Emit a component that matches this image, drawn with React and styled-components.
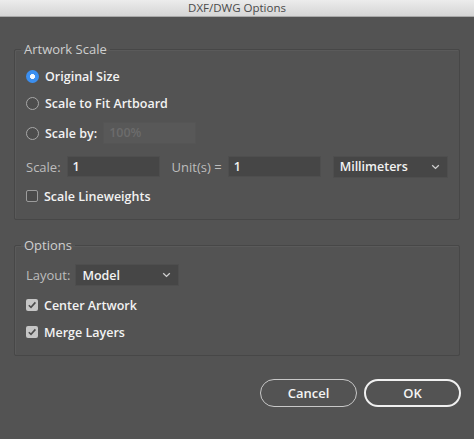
import React from "react";
import styled, { createGlobalStyle } from "styled-components";

const Global = createGlobalStyle`
  html, body {
    margin: 0;
    padding: 0;
    background: #535353;
  }
  * {
    box-sizing: border-box;
  }
`;

function Chevron() {
  return (
    <svg width="9" height="6" viewBox="0 0 9 6">
      <path d="M1.2 1.2 L4.5 4.4 L7.8 1.2" fill="none" stroke="#d0d0d0" strokeWidth="1.3" />
    </svg>
  );
}

function Radio({ checked, label }) {
  return (
    <Option>
      <RadioDot checked={checked} />
      <OptionText>{label}</OptionText>
    </Option>
  );
}

function Check({ checked, label }) {
  return (
    <Option>
      <Box checked={checked}>
        {checked && (
          <svg width="10" height="10" viewBox="0 0 10 10">
            <path d="M1.8 5.2 L4 7.4 L8.4 2.4" fill="none" stroke="#4c4c4c" strokeWidth="1.6" />
          </svg>
        )}
      </Box>
      <OptionText>{label}</OptionText>
    </Option>
  );
}

function App() {
  return (
    <Window>
      <Global />
      <TitleBar>DXF/DWG Options</TitleBar>
      <Body>
        <Group>
          <Legend>Artwork Scale</Legend>
          <Row h={20} top={9}>
            <Radio checked label="Original Size" />
          </Row>
          <Row h={20} top={7}>
            <Radio label="Scale to Fit Artboard" />
          </Row>
          <Row h={22} top={9}>
            <Radio label="Scale by:" />
            <DisabledField>100%</DisabledField>
          </Row>
          <Row h={21} top={12} gap={6}>
            <FieldLabel>Scale:</FieldLabel>
            <Field w={93}>1</Field>
            <FieldLabel style={{ marginLeft: 6 }}>Unit(s) =</FieldLabel>
            <Field w={93}>1</Field>
            <Select w={115} style={{ marginLeft: 6 }}>
              Millimeters
              <Chevron />
            </Select>
          </Row>
          <Row h={20} top={9}>
            <Check label="Scale Lineweights" />
          </Row>
        </Group>

        <Group spaced>
          <Legend>Options</Legend>
          <Row h={22} top={11} gap={5}>
            <FieldLabel>Layout:</FieldLabel>
            <Select w={104}>
              Model
              <Chevron />
            </Select>
          </Row>
          <Row h={20} top={9}>
            <Check checked label="Center Artwork" />
          </Row>
          <Row h={20} top={7}>
            <Check checked label="Merge Layers" />
          </Row>
        </Group>

        <Buttons>
          <Button>Cancel</Button>
          <Button primary>OK</Button>
        </Buttons>
      </Body>
    </Window>
  );
}

const Window = styled.div`
  width: 474px;
  height: 439px;
  background: #535353;
  font-family: "Open Sans", "Liberation Sans", sans-serif;
  overflow: hidden;
  display: flex;
  flex-direction: column;
`;

const TitleBar = styled.div`
  height: 17px;
  background: linear-gradient(#ececec, #d5d5d5);
  border-bottom: 1px solid #a9a9a9;
  color: #4a4a4a;
  font-size: 11.5px;
  line-height: 16px;
  text-align: center;
`;

const Body = styled.div`
  display: flex;
  flex-direction: column;
  padding: 24px 14px 0 14px;
`;

const Group = styled.fieldset`
  margin: ${(p) => (p.spaced ? "17px" : "0")} 0 0 0;
  padding: 0 10px 13px 11px;
  border: 1px solid #474747;
  border-radius: 2px;
  box-shadow: inset 1px 1px 0 #5a5a5a;
  min-width: 0;
`;

const Legend = styled.legend`
  padding: 0 3px;
  margin-left: -5px;
  font-size: 13px;
  line-height: 16px;
  color: #cfcfcf;
`;

const Row = styled.div`
  display: flex;
  align-items: center;
  height: ${(p) => p.h}px;
  margin-top: ${(p) => p.top}px;
  gap: ${(p) => p.gap || 5}px;
`;

const Option = styled.div`
  display: flex;
  align-items: center;
  gap: 6px;
`;

const OptionText = styled.span`
  font-size: 12.5px;
  font-weight: 600;
  color: #f2f2f2;
  white-space: nowrap;
`;

const RadioDot = styled.span`
  width: 13px;
  height: 13px;
  border-radius: 50%;
  flex: none;
  border: ${(p) => (p.checked ? "none" : "1.3px solid #a8a8a8")};
  background: ${(p) =>
    p.checked
      ? "radial-gradient(circle, #f4f8ff 0 2.2px, #3b8ff0 2.8px)"
      : "#4d4d4d"};
`;

const Box = styled.span`
  width: 12px;
  height: 12px;
  flex: none;
  border-radius: 2px;
  display: flex;
  align-items: center;
  justify-content: center;
  border: ${(p) => (p.checked ? "none" : "1px solid #9c9c9c")};
  background: ${(p) => (p.checked ? "#c6c6c6" : "#4b4b4b")};
`;

const FieldLabel = styled.span`
  font-size: 13px;
  color: #bdbdbd;
  white-space: nowrap;
`;

const Field = styled.div`
  width: ${(p) => p.w}px;
  height: 21px;
  background: #464646;
  border: 1px solid #4e4e4e;
  color: #f2f2f2;
  font-size: 12.5px;
  font-weight: 600;
  padding-left: 5px;
  line-height: 19px;
`;

const DisabledField = styled.div`
  width: 93px;
  height: 22px;
  margin-left: 1px;
  background: #585858;
  border: 1px solid #555555;
  color: #6c6c6c;
  font-size: 12.5px;
  font-weight: 600;
  padding-left: 5px;
  line-height: 20px;
`;

const Select = styled.div`
  width: ${(p) => p.w}px;
  height: 22px;
  background: #464646;
  border: 1px solid #4e4e4e;
  color: #f2f2f2;
  font-size: 12.5px;
  font-weight: 600;
  padding: 0 7px 0 6px;
  display: flex;
  align-items: center;
  justify-content: space-between;
`;

const Buttons = styled.div`
  display: flex;
  justify-content: flex-end;
  gap: 7px;
  margin-top: 23px;
  margin-right: -1px;
`;

const Button = styled.div`
  width: 97px;
  height: 28px;
  border-radius: 14px;
  border: ${(p) => (p.primary ? "2px solid #f0f0f0" : "1.5px solid #c8c8c8")};
  color: #f4f4f4;
  font-size: 13px;
  font-weight: 600;
  display: flex;
  align-items: center;
  justify-content: center;
`;

export default App;
